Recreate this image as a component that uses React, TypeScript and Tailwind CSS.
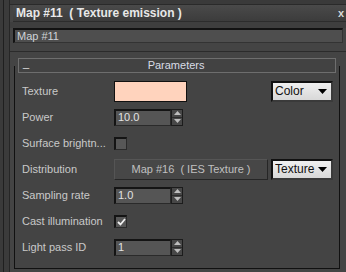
import React from "react";

const font = { fontFamily: '"Liberation Sans", Arial, sans-serif' };

function Spinner({ value }: { value: string }) {
  return (
    <div className="flex h-[17px]">
      <div className="w-[57px] h-full bg-[#555555] border-t-2 border-l-2 border-[#141414] border-r border-b border-r-[#2a2a2a] border-b-[#2a2a2a] text-[11px] leading-[13px] text-[#e2e2e2] pl-[2px]">
        {value}
      </div>
      <div className="w-[12px] h-full bg-[#474747] border border-[#1c1c1c] flex flex-col">
        <div className="flex-1 flex items-center justify-center border-b border-[#2c2c2c]">
          <svg width="7" height="4" viewBox="0 0 7 4">
            <path d="M3.5 0 L7 4 L0 4 Z" fill="#bdbdbd" />
          </svg>
        </div>
        <div className="flex-1 flex items-center justify-center">
          <svg width="7" height="4" viewBox="0 0 7 4">
            <path d="M0 0 L7 0 L3.5 4 Z" fill="#bdbdbd" />
          </svg>
        </div>
      </div>
    </div>
  );
}

function Check({ checked }: { checked?: boolean }) {
  return (
    <div className="w-[13px] h-[13px] bg-[#575757] border-t-2 border-l-2 border-[#141414] border-r border-b border-r-[#2a2a2a] border-b-[#2a2a2a] flex items-center justify-center">
      {checked && (
        <svg width="9" height="8" viewBox="0 0 9 8">
          <path d="M1 4 L3.5 6.5 L8 1" stroke="#f0f0f0" strokeWidth="1.8" fill="none" />
        </svg>
      )}
    </div>
  );
}

function Dropdown({ label }: { label: string }) {
  return (
    <div className="w-[62px] h-[21px] bg-gradient-to-b from-[#f0f0f0] to-[#d8d8d8] border-t-2 border-l-2 border-[#111111] border-r-2 border-b-2 border-r-[#3a3a3a] border-b-[#3a3a3a] flex items-center pl-[2px] pr-[4px]">
      <span className="flex-1 overflow-hidden whitespace-nowrap text-[12px] text-[#111111] leading-none">{label}</span>
      <svg width="9" height="5" viewBox="0 0 9 5" className="shrink-0 ml-[2px]">
        <path d="M0 0 L9 0 L4.5 5 Z" fill="#000" />
      </svg>
    </div>
  );
}

function Row({ label, children }: { label: string; children: React.ReactNode }) {
  return (
    <div className="h-[26px] flex items-center">
      <div className="w-[92px] text-[11px] text-[#c9c9c9] whitespace-nowrap overflow-hidden">{label}</div>
      {children}
    </div>
  );
}

export default function App() {
  return (
    <div className="w-[346px] h-[272px] bg-[#3c3c3c] flex overflow-hidden" style={font}>
      {/* left strip */}
      <div className="w-[3px] bg-[#3a3a3a]" />
      <div className="w-px bg-[#1f1f1f]" />
      <div className="w-[5px] bg-[#3b3b3b]" />
      <div className="w-px bg-[#262626]" />
      {/* main */}
      <div className="flex-1 flex flex-col bg-[#444444]">
        <div className="h-[5px] bg-[#3a3a3a] border-b border-[#2a2a2a]" />
        {/* title */}
        <div className="h-[17px] ml-[3px] bg-gradient-to-b from-[#4a4a4a] to-[#3c3c3c] flex items-center justify-between border-b border-[#2c2c2c]">
          <span className="text-[12px] font-bold text-[#e8e8e8] whitespace-pre pl-[3px]">Map #11  ( Texture emission )</span>
          <span className="text-[11px] font-bold text-[#d8d8d8] pr-[2px]">x</span>
        </div>
        <div className="h-[6px] bg-[#3e3e3e]" />
        {/* name field */}
        <div className="mx-[3px] h-[15px] bg-[#4e4e4e] border-t-2 border-l-2 border-[#121212] border-r border-b border-r-[#333] border-b-[#333] text-[11px] leading-[12px] text-[#cfd3d8] pl-[2px]">
          Map #11
        </div>
        <div className="h-[9px] border-b border-[#2b2b2b]" />
        {/* rollout */}
        <div className="flex-1 flex flex-col pt-[6px] pl-[4px] pr-[6px]">
          <div className="relative z-10 mx-[4px] h-[15px] bg-[#424242] border border-[#6e6e6e] flex items-center">
            <span className="text-[11px] text-[#e0e0e0] pl-[4px] leading-none -mt-[4px]">_</span>
            <span className="flex-1 text-center text-[11px] text-[#d8dce6] leading-none pr-[12px]">Parameters</span>
          </div>
          <div className="-mt-[7px] h-[203px] border-l border-r border-b border-[#111111] flex flex-col pl-[7px] pt-[12px]">
            <Row label="Texture">
              <div className="w-[73px] h-[21px] bg-[#ffd3bd] border border-[#111]" />
              <div className="flex-1" />
              <div className="mr-[6px]"><Dropdown label="Color" /></div>
            </Row>
            <Row label="Power">
              <Spinner value="10.0" />
            </Row>
            <Row label="Surface brightn...">
              <Check />
            </Row>
            <Row label="Distribution">
              <div className="w-[154px] h-[21px] bg-[#474747] border border-[#555] border-r-[#262626] border-b-[#262626] flex items-center justify-center text-[11px] text-[#c0c0c0] whitespace-pre">
                Map #16  ( IES Texture )
              </div>
              <div className="flex-1" />
              <div className="mr-[6px]"><Dropdown label="Texture" /></div>
            </Row>
            <Row label="Sampling rate">
              <Spinner value="1.0" />
            </Row>
            <Row label="Cast illumination">
              <Check checked />
            </Row>
            <Row label="Light pass ID">
              <Spinner value="1" />
            </Row>
          </div>
          <div className="flex-1" />
        </div>
      </div>
    </div>
  );
}
